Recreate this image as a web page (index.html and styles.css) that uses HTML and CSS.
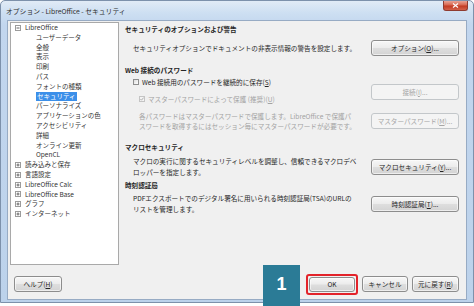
FILE: index.html
```html
<!DOCTYPE html>
<html lang="ja">
<head>
<meta charset="utf-8">
<title>オプション - LibreOffice - セキュリティ</title>
<link rel="stylesheet" href="styles.css">
</head>
<body>
<div class="window">
  <div class="titlebar">
    <span class="title">オプション - LibreOffice - セキュリティ</span>
    <span class="close"><svg width="7" height="5" viewBox="0 0 7 5"><path d="M1 0.5 L6 4.5 M6 0.5 L1 4.5" stroke="#fff" stroke-width="1.2"/></svg></span>
  </div>
  <div class="client">
    <div class="main">
      <div class="tree">
        <div class="node top"><svg class="exp" width="6" height="6" viewBox="0 0 6 6"><rect x="0.5" y="0.5" width="5" height="5" fill="#fff" stroke="#9c9c9c"/><path d="M1.5 3h3" stroke="#666"/></svg>LibreOffice</div>
        <div class="node child">ユーザーデータ</div>
        <div class="node child">全般</div>
        <div class="node child">表示</div>
        <div class="node child">印刷</div>
        <div class="node child">パス</div>
        <div class="node child">フォントの種類</div>
        <div class="node child"><span class="sel">セキュリティ</span></div>
        <div class="node child">パーソナライズ</div>
        <div class="node child">アプリケーションの色</div>
        <div class="node child">アクセシビリティ</div>
        <div class="node child">詳細</div>
        <div class="node child">オンライン更新</div>
        <div class="node child">OpenCL</div>
        <div class="node top"><svg class="exp" width="6" height="6" viewBox="0 0 6 6"><rect x="0.5" y="0.5" width="5" height="5" fill="#fff" stroke="#9c9c9c"/><path d="M1.5 3h3M3 1.5v3" stroke="#666"/></svg>読み込みと保存</div>
        <div class="node top"><svg class="exp" width="6" height="6" viewBox="0 0 6 6"><rect x="0.5" y="0.5" width="5" height="5" fill="#fff" stroke="#9c9c9c"/><path d="M1.5 3h3M3 1.5v3" stroke="#666"/></svg>言語設定</div>
        <div class="node top"><svg class="exp" width="6" height="6" viewBox="0 0 6 6"><rect x="0.5" y="0.5" width="5" height="5" fill="#fff" stroke="#9c9c9c"/><path d="M1.5 3h3M3 1.5v3" stroke="#666"/></svg>LibreOffice Calc</div>
        <div class="node top"><svg class="exp" width="6" height="6" viewBox="0 0 6 6"><rect x="0.5" y="0.5" width="5" height="5" fill="#fff" stroke="#9c9c9c"/><path d="M1.5 3h3M3 1.5v3" stroke="#666"/></svg>LibreOffice Base</div>
        <div class="node top"><svg class="exp" width="6" height="6" viewBox="0 0 6 6"><rect x="0.5" y="0.5" width="5" height="5" fill="#fff" stroke="#9c9c9c"/><path d="M1.5 3h3M3 1.5v3" stroke="#666"/></svg>グラフ</div>
        <div class="node top"><svg class="exp" width="6" height="6" viewBox="0 0 6 6"><rect x="0.5" y="0.5" width="5" height="5" fill="#fff" stroke="#9c9c9c"/><path d="M1.5 3h3M3 1.5v3" stroke="#666"/></svg>インターネット</div>
      </div>
      <div class="pane">
        <div class="head h-first">セキュリティのオプションおよび警告</div>
        <div class="row row-opt">
          <div class="txt">セキュリティオプションでドキュメントの非表示情報の警告を設定します。</div>
          <button class="btn">オプション(<u>O</u>)...</button>
        </div>
        <div class="head h-web">Web 接続のパスワード</div>
        <div class="web">
          <div class="web-left">
            <div class="cb"><span class="box"></span>Web 接続用のパスワードを継続的に保存(<u>S</u>)</div>
            <div class="cb cb-dis"><span class="box box-dis"><svg width="4" height="4" viewBox="0 0 4 4"><path d="M0.4 2 L1.5 3.2 L3.6 0.6" fill="none" stroke="#a8a8a8" stroke-width="0.9"/></svg></span>マスターパスワードによって保護 (推奨)(<u>U</u>)</div>
            <div class="note">各パスワードはマスターパスワードで保護します。LibreOffice で保護パ<br>スワードを取得するにはセッション毎にマスターパスワードが必要です。</div>
          </div>
          <div class="web-right">
            <button class="btn dis b-conn">接続(<u>I</u>)...</button>
            <button class="btn dis b-master">マスターパスワード(<u>M</u>)...</button>
          </div>
        </div>
        <div class="head h-macro">マクロセキュリティ</div>
        <div class="row row-two row-macro">
          <div class="txt">マクロの実行に関するセキュリティレベルを調整し、信頼できるマクロデベ<br>ロッパーを指定します。</div>
          <button class="btn">マクロセキュリティ(<u>Y</u>)...</button>
        </div>
        <div class="head h-tsa">時刻認証局</div>
        <div class="row row-two row-tsa">
          <div class="txt">PDFエクスポートでのデジタル署名に用いられる時刻認証局(TSA)のURLの<br>リストを管理します。</div>
          <button class="btn">時刻認証局(<u>T</u>)...</button>
        </div>
      </div>
    </div>
    <div class="bottom">
      <button class="btn b-help">ヘルプ(<u>H</u>)</button>
      <span class="spacer"></span>
      <span class="ok-mark"><button class="btn b-ok">OK</button></span>
      <button class="btn b-cancel">キャンセル</button>
      <button class="btn b-reset">元に戻す(<u>R</u>)</button>
    </div>
  </div>
</div>
<div class="badge">1</div>
</body>
</html>
```
FILE: styles.css
```css
html, body {
  margin: 0;
  padding: 0;
}
body {
  width: 474px;
  height: 306px;
  background: #ffffff;
  overflow: hidden;
  position: relative;
  font-family: "Noto Sans CJK JP", "Noto Sans", sans-serif;
  color: #2a2a2a;
}
.window {
  width: 474px;
  height: 303px;
  box-sizing: border-box;
  border: 1px solid #7d91ab;
  border-radius: 5px 5px 0 0;
  background: linear-gradient(180deg, #e1ebf6 0px, #cddff2 12px, #c2d6ee 24px, #bcd2eb 100%);
  display: flex;
  flex-direction: column;
}
.titlebar {
  height: 19px;
  display: flex;
  align-items: center;
}
.title {
  padding-left: 5px;
  font-size: 6.8px;
  color: #2e2e2e;
  white-space: nowrap;
}
.close {
  margin-left: auto;
  margin-right: 5px;
  align-self: flex-start;
  width: 25px;
  height: 10px;
  box-sizing: border-box;
  border: 1px solid #8f3b30;
  border-top: none;
  border-radius: 0 0 3px 3px;
  background: linear-gradient(180deg, #e8a496 0%, #d8664f 45%, #c23a22 55%, #d2614a 100%);
  display: flex;
  align-items: center;
  justify-content: center;
}
.close svg { display: block; }
.client {
  margin-left: 6px;
  width: 460px;
  height: 280px;
  box-sizing: border-box;
  border: 1px solid #97abc4;
  background: #f0f0f0;
  display: flex;
  flex-direction: column;
}
.main {
  display: flex;
  padding: 1px 7px 0 2px;
  gap: 6px;
}
.tree {
  width: 109px;
  height: 243px;
  box-sizing: border-box;
  border: 1px solid #a9a9a9;
  background: #ffffff;
  font-size: 6.5px;
  color: #333;
}
.node {
  height: 9.8px;
  line-height: 9.8px;
  white-space: nowrap;
  display: flex;
  align-items: center;
}
.node.top { padding-left: 4px; }
.node.child { padding-left: 25px; }
.exp {
  display: block;
  margin-right: 4px;
  flex: none;
}
.sel {
  background: #3b8fe9;
  color: #ffffff;
  padding: 0 1px;
  line-height: 9px;
}
.pane {
  width: 334px;
  font-size: 6.6px;
  color: #262626;
}
.head {
  font-weight: bold;
  line-height: 10px;
  height: 10px;
  white-space: nowrap;
}
.h-first { margin-top: 2px; }
.h-web { margin-top: 9px; }
.h-macro { margin-top: 11px; }
.h-tsa { margin-top: 3px; }
.row {
  display: flex;
  align-items: center;
  justify-content: space-between;
  padding-left: 8px;
}
.row-opt { margin-top: 6px; height: 16px; }
.row-macro { margin-top: 4px; }
.row-tsa { margin-top: 3px; }
.txt {
  white-space: nowrap;
  line-height: 10.5px;
}
.row-opt .txt { line-height: 10px; }
.btn {
  font-family: "Noto Sans CJK JP", "Noto Sans", sans-serif;
  font-size: 6.6px;
  color: #262626;
  width: 88px;
  height: 16px;
  box-sizing: border-box;
  padding: 0;
  margin: 0;
  border: 1px solid #8d8d8d;
  border-radius: 3px;
  background: linear-gradient(180deg, #f7f7f7 0%, #ececec 48%, #dedede 52%, #d3d3d3 100%);
  box-shadow: inset 0 0 0 1px rgba(255,255,255,0.6);
  white-space: nowrap;
  line-height: 14px;
  text-align: center;
  flex: none;
}
.btn u { text-underline-offset: 1px; }
.btn.dis {
  color: #a6a6a6;
  border-color: #c3c7ca;
  background: #f4f4f4;
  box-shadow: none;
}
.web {
  margin-top: 2px;
  display: flex;
  justify-content: space-between;
  padding-left: 8px;
}
.web-left { display: flex; flex-direction: column; }
.web-right { display: flex; flex-direction: column; }
.cb {
  display: flex;
  align-items: center;
  height: 10px;
  line-height: 10px;
  white-space: nowrap;
}
.box {
  width: 6px;
  height: 6px;
  box-sizing: border-box;
  border: 1px solid #8e8f8f;
  background: linear-gradient(135deg, #dcdcdc, #ffffff);
  margin-right: 3px;
  flex: none;
  display: flex;
  align-items: center;
  justify-content: center;
}
.box svg { display: block; }
.cb-dis {
  margin-top: 7px;
  margin-left: 6px;
  color: #a3a3a3;
}
.box-dis {
  border-color: #c4c4c4;
  background: #f4f4f4;
}
.note {
  margin-top: 7px;
  padding-left: 6px;
  line-height: 10px;
  color: #a3a3a3;
  white-space: nowrap;
}
.b-conn { margin-top: 7px; }
.b-master { margin-top: 13px; }
.bottom {
  height: 34px;
  box-sizing: border-box;
  padding: 4px 7px 0 6px;
  display: flex;
  align-items: center;
}
.spacer { flex: 1; }
.b-help { width: 48px; }
.ok-mark {
  display: flex;
  border: 2px solid #e3232a;
  border-radius: 3px;
  padding: 1px;
  box-sizing: border-box;
  width: 52px;
  height: 21px;
  align-items: center;
}
.b-ok { width: 46px; height: 15px; line-height: 13px; }
.b-cancel { width: 46px; margin-left: 4px; }
.b-reset { width: 47px; margin-left: 4px; }
.badge {
  position: absolute;
  left: 263px;
  top: 265px;
  width: 37px;
  height: 41px;
  background: #2b7b96;
  color: #ffffff;
  font-family: "Liberation Sans", Arial, sans-serif;
  font-weight: bold;
  font-size: 18px;
  line-height: 38px;
  text-align: center;
}
```
